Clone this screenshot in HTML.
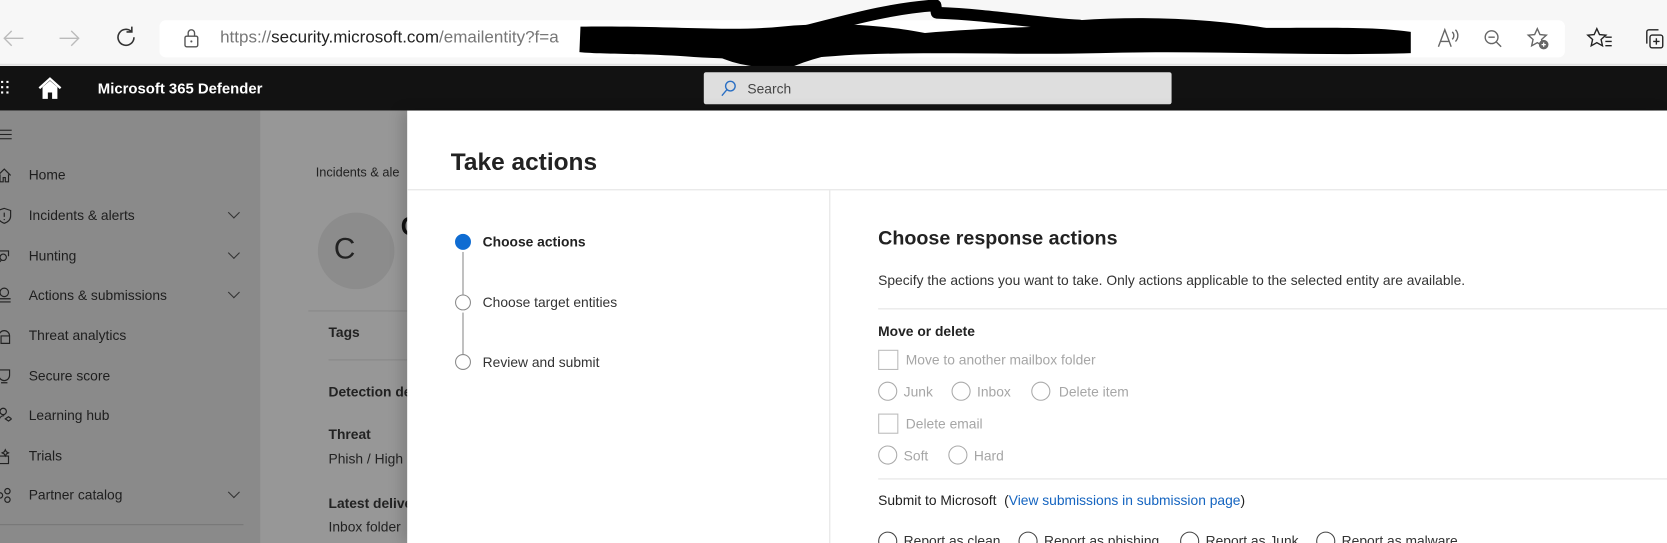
<!DOCTYPE html>
<html><head><meta charset="utf-8"><style>
*{margin:0;padding:0;box-sizing:border-box}
html,body{width:1667px;height:543px;overflow:hidden;background:#fff}
body{font-family:"Liberation Sans",sans-serif;color:#222}
#w{position:absolute;left:0;top:0;width:1568px;height:511px;transform:scale(1.06314);transform-origin:0 0;overflow:hidden}
.a{position:absolute;white-space:nowrap}
.nav{position:absolute;left:0;top:104px;width:245px;height:407px;background:#8a8a8a}
.main{position:absolute;left:245px;top:104px;width:140px;height:407px;background:#979797}
.ni{position:absolute;left:27px;font-size:13px;color:#1e1e1e}
.ic{position:absolute;left:-3px}
.chev{position:absolute;left:216px;width:8px;height:8px;border-right:1.3px solid #333;border-bottom:1.3px solid #333;transform:rotate(45deg)}
.rad{position:absolute;width:18px;height:18px;border:1.3px solid #aaa;border-radius:50%}
.chk{position:absolute;width:19px;height:19px;border:1.3px solid #bbb}
.dis{color:#a6a6a6;font-size:13px}
</style></head><body><div id="w">
<div class="a" style="left:0;top:0;width:1568px;height:61px;background:#f7f7f7;border-bottom:1px solid #ddd"></div>
<div class="a" style="left:150px;top:19px;width:1322px;height:35px;background:#fff;border-radius:6px"></div>
<svg class="a" style="left:0;top:22px" width="140" height="28" viewBox="0 0 140 28">
<path d="M22 14H4M11 7l-7 7 7 7" stroke="#bbb" stroke-width="1.3" fill="none"/>
<path d="M56 14h18M67 7l7 7-7 7" stroke="#bbb" stroke-width="1.3" fill="none"/>
<path d="M124 8a7.5 7.5 0 1 0 2 5M124 3v5h-5" stroke="#333" stroke-width="1.5" fill="none"/>
</svg>
<svg class="a" style="left:172px;top:26px" width="16" height="20"><rect x="2" y="8" width="12" height="10" rx="1.5" fill="none" stroke="#555" stroke-width="1.3"/><path d="M5 8V5a3 3 0 0 1 6 0v3" fill="none" stroke="#555" stroke-width="1.3"/><circle cx="8" cy="13" r="1" fill="#555"/></svg>
<div class="a" style="left:207px;top:27px;font-size:16px;color:#777">https://<span style="color:#222">security.microsoft.com</span>/emailentity?f=a</div>
<div class="a" style="left:1318px;top:27px;font-size:16px;color:#777">..</div>
<svg class="a" style="left:535px;top:0" width="800" height="65" viewBox="0 0 800 65">
<path d="M11 25C100 24 150 30 200 25C250 20 300 24 335 31C420 24 520 22 600 26C700 27 750 24 792 30L792 50C700 53 600 47 500 50C420 52 330 48 260 52C200 57 150 56 110 53C60 50 30 51 10 49Z" fill="#000"/>
<g stroke="#000" fill="none" stroke-linecap="round" stroke-linejoin="round">
<path d="M220 30C260 20 300 8 345 5L346 12C400 14 440 22 480 24" stroke-width="11"/>
<path d="M140 48c20 10 40 12 70 10 30-12 60-16 80-18" stroke-width="9"/>
<path d="M480 24c60-4 120-2 180 8 40 6 80 8 120 10" stroke-width="10"/>
</g></svg>
<svg class="a" style="left:1350px;top:24px" width="218" height="26" viewBox="0 0 218 26">
<g fill="none" stroke="#666" stroke-width="1.3">
<path d="M3 20l6-16 6 16M5 15h8M16 6c2 2 2 5 0 7M19 4c3 3 3 8 0 11"/>
<circle cx="53" cy="11" r="6"/><path d="M50 11h6M57 15l5 5"/>
<path d="M96 3l2.5 5.5 6 .6-4.5 4 1.3 6-5.3-3-5.3 3 1.3-6-4.5-4 6-.6z"/>
</g>
<circle cx="102" cy="18" r="4.5" fill="#666"/><path d="M100 18h4M102 16v4" stroke="#fff" stroke-width="1.2"/>
<g fill="none" stroke="#222" stroke-width="1.3">
<path d="M152 3l2.5 5.5 6 .6-4.5 4 1.3 6-5.3-3-5.3 3 1.3-6-4.5-4 6-.6zM160 11h6M160 15h6M160 19h6"/>
<rect x="202" y="9" width="12" height="12" rx="2"/><path d="M199 17V6a2 2 0 0 1 2-2h9M208 12v6M205 15h6"/>
</g></svg>
<div class="a" style="left:0;top:62px;width:1568px;height:42px;background:#121212"></div>
<svg class="a" style="left:0;top:76px" width="12" height="14"><g fill="#fff"><rect x="1" y="0" width="2" height="2"/><rect x="6" y="0" width="2" height="2"/><rect x="1" y="5" width="2" height="2"/><rect x="6" y="5" width="2" height="2"/><rect x="1" y="10" width="2" height="2"/><rect x="6" y="10" width="2" height="2"/></g></svg>
<svg class="a" style="left:35px;top:72px" width="24" height="22" viewBox="0 0 24 22"><path d="M2 11L12 2l10 9" fill="none" stroke="#fff" stroke-width="2.2"/><path d="M5 10v11h5v-6h4v6h5V10L12 4z" fill="#fff"/></svg>
<div class="a" style="left:92px;top:75px;font-size:14px;font-weight:bold;color:#fff">Microsoft 365 Defender</div>
<div class="a" style="left:662px;top:68px;width:440px;height:30px;background:#dedede;border-radius:2px"></div>
<svg class="a" style="left:677px;top:75px" width="16" height="16"><circle cx="10" cy="6" r="4.5" fill="none" stroke="#2a6fc4" stroke-width="1.3"/><path d="M7 9L2 15" stroke="#2a6fc4" stroke-width="1.3"/></svg>
<div class="a" style="left:703px;top:76px;font-size:13px;color:#444">Search</div>
<div class="nav"></div>
<div class="a" style="left:0;top:122px;width:11px;height:9px;border-top:1.2px solid #222;border-bottom:1.2px solid #222"></div>
<div class="a" style="left:0;top:126px;width:11px;height:1.2px;background:#222"></div>
<svg class="ic" style="top:157px" width="14" height="16"><path d="M1 8L7 2l6 6M3 7v7h3v-4h2v4h3V7" fill="none" stroke="#222" stroke-width="1.1"/></svg>
<div class="ni" style="top:157px">Home</div>
<svg class="ic" style="top:195px" width="14" height="16"><path d="M7 1l6 2v5c0 4-3 6-6 7-3-1-6-3-6-7V3z M7 5v4M7 11v1" fill="none" stroke="#222" stroke-width="1.1"/></svg>
<div class="ni" style="top:195px">Incidents &amp; alerts</div><div class="chev" style="top:196px"></div>
<svg class="ic" style="top:233px" width="14" height="16"><path d="M2 3h9v5M3 9a3 3 0 1 0 6 0 3 3 0 1 0-6 0M4 12l-3 3" fill="none" stroke="#222" stroke-width="1.1"/></svg>
<div class="ni" style="top:233px">Hunting</div><div class="chev" style="top:234px"></div>
<svg class="ic" style="top:270px" width="14" height="16"><circle cx="7" cy="5" r="4" fill="none" stroke="#222" stroke-width="1.1"/><path d="M3 11h10M3 14h10" stroke="#222" stroke-width="1.1"/></svg>
<div class="ni" style="top:270px">Actions &amp; submissions</div><div class="chev" style="top:271px"></div>
<svg class="ic" style="top:308px" width="14" height="16"><path d="M2 8a5 5 0 0 1 10 0M4 8h8v7H4z" fill="none" stroke="#222" stroke-width="1.1"/></svg>
<div class="ni" style="top:308px">Threat analytics</div>
<svg class="ic" style="top:346px" width="14" height="16"><path d="M2 2h10v5a5 5 0 0 1-10 0zM4 14h6" fill="none" stroke="#222" stroke-width="1.1"/></svg>
<div class="ni" style="top:346px">Secure score</div>
<svg class="ic" style="top:383px" width="14" height="16"><circle cx="6" cy="4" r="3" fill="none" stroke="#222" stroke-width="1.1"/><path d="M2 14c0-4 2-6 5-6M8 11l3-2 3 2-3 2z" fill="none" stroke="#222" stroke-width="1.1"/></svg>
<div class="ni" style="top:383px">Learning hub</div>
<svg class="ic" style="top:421px" width="14" height="16"><path d="M2 8h9v7H2zM8 2l1 2 2 1-2 1-1 2-1-2-2-1 2-1z" fill="none" stroke="#222" stroke-width="1.1"/></svg>
<div class="ni" style="top:421px">Trials</div>
<svg class="ic" style="top:458px" width="14" height="16"><circle cx="3" cy="8" r="2.5" fill="none" stroke="#222" stroke-width="1.1"/><circle cx="10" cy="4" r="2.5" fill="none" stroke="#222" stroke-width="1.1"/><circle cx="10" cy="12" r="2.5" fill="none" stroke="#222" stroke-width="1.1"/></svg>
<div class="ni" style="top:458px">Partner catalog</div><div class="chev" style="top:459px"></div>
<div class="a" style="left:0;top:493px;width:229px;height:1px;background:#777"></div>
<div class="main"></div>
<div class="a" style="left:297px;top:155px;font-size:12px;color:#222">Incidents &amp; ale</div>
<div class="a" style="left:299px;top:200px;width:72px;height:72px;border-radius:50%;background:#8c8c8c"></div>
<div class="a" style="left:314px;top:218px;font-size:28px;color:#222">C</div>
<div class="a" style="left:377px;top:200px;font-size:24px;font-weight:bold;color:#111">C</div>
<div class="a" style="left:290px;top:292px;width:95px;height:1px;background:#888"></div>
<div class="a" style="left:309px;top:305px;font-size:13px;font-weight:bold;color:#222">Tags</div>
<div class="a" style="left:309px;top:338px;width:76px;height:1px;background:#888"></div>
<div class="a" style="left:309px;top:361px;font-size:13px;font-weight:bold;color:#222">Detection de</div>
<div class="a" style="left:309px;top:401px;font-size:13px;font-weight:bold;color:#222">Threat</div>
<div class="a" style="left:309px;top:424px;font-size:13px;color:#222">Phish / High</div>
<div class="a" style="left:309px;top:466px;font-size:13px;font-weight:bold;color:#222">Latest delive</div>
<div class="a" style="left:309px;top:488px;font-size:13px;color:#222">Inbox folder</div>
<div class="a" style="left:383px;top:104px;width:1185px;height:407px;background:#fff;box-shadow:-6px 0 12px rgba(0,0,0,.15)"></div>
<div class="a" style="left:424px;top:139px;font-size:23px;font-weight:bold;color:#222">Take actions</div>
<div class="a" style="left:383px;top:178px;width:1185px;height:1px;background:#e3e3e3"></div>
<div class="a" style="left:780px;top:179px;width:1px;height:332px;background:#e3e3e3"></div>
<div class="a" style="left:428px;top:220px;width:15px;height:15px;border-radius:50%;background:#0f6cd2"></div>
<div class="a" style="left:434.5px;top:237px;width:1.5px;height:40px;background:#8a8a8a"></div>
<div class="a" style="left:428px;top:277px;width:15px;height:15px;border-radius:50%;border:1.3px solid #8a8a8a"></div>
<div class="a" style="left:434.5px;top:294px;width:1.5px;height:39px;background:#8a8a8a"></div>
<div class="a" style="left:428px;top:333px;width:15px;height:15px;border-radius:50%;border:1.3px solid #8a8a8a"></div>
<div class="a" style="left:454px;top:220px;font-size:13px;font-weight:bold;color:#222">Choose actions</div>
<div class="a" style="left:454px;top:277px;font-size:13px;color:#333">Choose target entities</div>
<div class="a" style="left:454px;top:333px;font-size:13px;color:#333">Review and submit</div>
<div class="a" style="left:826px;top:213px;font-size:18.5px;font-weight:bold;color:#222">Choose response actions</div>
<div class="a" style="left:826px;top:256px;font-size:13px;color:#333">Specify the actions you want to take. Only actions applicable to the selected entity are available.</div>
<div class="a" style="left:826px;top:290px;width:742px;height:1px;background:#e3e3e3"></div>
<div class="a" style="left:826px;top:304px;font-size:13px;color:#222;font-weight:bold">Move or delete</div>
<div class="chk" style="left:826px;top:329px"></div><div class="a dis" style="left:852px;top:331px">Move to another mailbox folder</div>
<div class="rad" style="left:826px;top:359px"></div><div class="a dis" style="left:850px;top:361px">Junk</div>
<div class="rad" style="left:895px;top:359px"></div><div class="a dis" style="left:919px;top:361px">Inbox</div>
<div class="rad" style="left:970px;top:359px"></div><div class="a dis" style="left:996px;top:361px">Delete item</div>
<div class="chk" style="left:826px;top:389px"></div><div class="a dis" style="left:852px;top:391px">Delete email</div>
<div class="rad" style="left:826px;top:419px"></div><div class="a dis" style="left:850px;top:421px">Soft</div>
<div class="rad" style="left:892px;top:419px"></div><div class="a dis" style="left:916px;top:421px">Hard</div>
<div class="a" style="left:826px;top:450px;width:742px;height:1px;background:#e3e3e3"></div>
<div class="a" style="left:826px;top:463px;font-size:13px;color:#222">Submit to Microsoft &nbsp;(<span style="color:#1464c0">View submissions in submission page</span>)</div>
<div class="rad" style="left:826px;top:500px;border-color:#444"></div><div class="a" style="left:850px;top:501px;font-size:13px;color:#333">Report as clean</div>
<div class="rad" style="left:958px;top:500px;border-color:#444"></div><div class="a" style="left:982px;top:501px;font-size:13px;color:#333">Report as phishing</div>
<div class="rad" style="left:1110px;top:500px;border-color:#444"></div><div class="a" style="left:1134px;top:501px;font-size:13px;color:#333">Report as Junk</div>
<div class="rad" style="left:1238px;top:500px;border-color:#444"></div><div class="a" style="left:1262px;top:501px;font-size:13px;color:#333">Report as malware</div>
</div></body></html>
